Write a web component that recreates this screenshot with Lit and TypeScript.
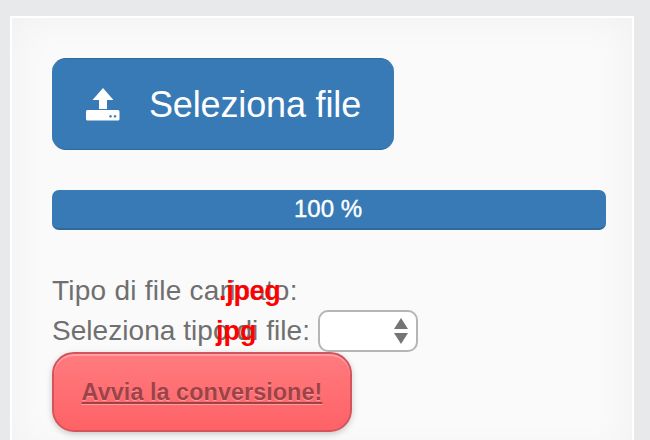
import { LitElement, html, css } from "lit";
import { customElement } from "lit/decorators.js";

@customElement("app-root")
export class AppRoot extends LitElement {
  static styles = css`
    :host { display: block; width: 650px; height: 440px; overflow: hidden; background: #e8e9eb; font-family: "Liberation Sans", Arial, sans-serif; }
    .panel { box-sizing: border-box; width: 624px; height: 440px; margin: 0 0 0 10px; position: relative; top: 16px; border: 2px solid #fff; border-bottom: none; background: #fafafa; box-shadow: inset 0 0 40px rgba(0,0,0,0.045); padding: 40px 26px 0 40px; display: flex; flex-direction: column; align-items: flex-start; }
    .upload { box-sizing: border-box; width: 342px; height: 92px; background: #377ab6; border-radius: 14px; border-top: 1px solid #31699b; border-bottom: 1px solid #31699b; display: flex; align-items: center; color: #fff; padding-left: 34px; gap: 30px; font-size: 36px; }
    .upload svg { width: 34px; height: 33px; flex: none; display: block; }
    .upload span { letter-spacing: -0.15px; margin-left: -1px; padding-top: 2px; }
    .progress { box-sizing: border-box; margin-top: 40px; width: 554px; height: 40px; background: #377ab6; border-radius: 7px; border-bottom: 2px solid #31699b; color: #fff; font-size: 24px; font-weight: 500; display: flex; align-items: center; justify-content: center; -webkit-text-stroke: 0.4px #fff; padding-right: 2px; }
    .rows { margin-top: 40px; color: #6f6f6f; font-size: 28px; line-height: 40px; }
    .row { position: relative; display: flex; align-items: center; height: 40px; white-space: nowrap; }
    .label { padding-top: 2px; }
    .wide { letter-spacing: 0.25px; }
    .tight { letter-spacing: 0.05px; }
    .over { position: absolute; color: #f00; font-weight: 700; font-size: 27px; top: 1px; }
    .o1 { left: 167px; letter-spacing: -0.3px; }
    .o2 { left: 164px; }
    .select { box-sizing: border-box; width: 100px; height: 42px; margin-left: 8px; margin-top: 2px; background: #fff; border: 2px solid #b5b5b5; border-radius: 10px; display: flex; align-items: center; justify-content: flex-end; padding-right: 8px; }
    .select svg { width: 14px; height: 26px; display: block; }
    .go { box-sizing: border-box; width: 300px; height: 80px; margin-top: 2px; background: linear-gradient(#ff7b7f, #fe6266); border: 2px solid #d5535a; border-radius: 22px; box-shadow: inset 0 2px 0 #ffa0a3, 0 2px 6px rgba(0,0,0,0.2); display: flex; align-items: center; justify-content: center; color: #9d4347; font-size: 23.5px; font-weight: 700; text-decoration: underline; text-shadow: 0 1px 0 #ff9ea1; }
  `;

  render() {
    return html`
      <div class="panel">
        <div class="upload">
          <svg viewBox="0 0 34 33">
            <path fill="#fff" d="M17 0 L27.5 12 L21 12 L21 21 L13 21 L13 12 L6.500 12 Z" />
            <path fill="#fff" fill-rule="evenodd" d="M1.500 22 L32 22 Q33.500 22 33.500 23.500 L33.500 31 Q33.500 32.500 32 32.500 L1.500 32.500 Q0 32.500 0 31 L0 23.500 Q0 22 1.500 22 Z M24.500 27 a1.300 1.300 0 1 0 0.01 0 Z M29 27 a1.300 1.300 0 1 0 0.01 0 Z" />
          </svg>
          <span>Seleziona file</span>
        </div>
        <div class="progress">100 %</div>
        <div class="rows">
          <div class="row"><span class="label wide">Tipo di file caricato:</span><span class="over o1">.jpeg</span></div>
          <div class="row"><span class="label tight">Seleziona tipo di file:</span><span class="over o2">jpg</span>
            <div class="select">
              <svg viewBox="0 0 14 26"><path fill="#757575" d="M7 0 L14 11 L0 11 Z M0 15 L14 15 L7 26 Z" /></svg>
            </div>
          </div>
        </div>
        <div class="go">Avvia la conversione!</div>
      </div>
    `;
  }
}
